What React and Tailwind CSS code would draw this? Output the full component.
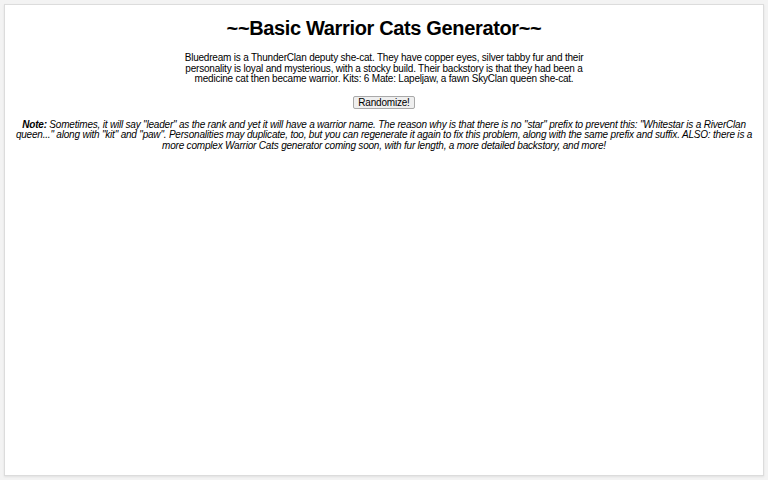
// Basic Warrior Cats Generator — single page with a generated cat and a note.

export default function App() {
  return (
    <div className="min-h-[480px] bg-[#f3f3f3] p-1 font-['Liberation_Sans',Arial,sans-serif] text-black">
      <div className="h-[472px] bg-white border border-[#dcdcdc] shadow-[0_1px_2px_rgba(0,0,0,0.08)] px-[10px] pt-[9px]">
        <h1 className="text-center text-[20px] font-bold leading-[28px] tracking-[-0.35px]">
          ~~Basic Warrior Cats Generator~~
        </h1>
        <p className="mx-auto mt-[11px] w-[410px] text-center text-[10px] leading-[10.5px] tracking-[-0.2px]">
          Bluedream is a ThunderClan deputy she-cat. They have copper eyes, silver tabby fur and their
          personality is loyal and mysterious, with a stocky build. Their backstory is that they had been a
          medicine cat then became warrior. Kits: 6 Mate: Lapeljaw, a fawn SkyClan queen she-cat.
        </p>
        <div className="mt-[11px] flex justify-center">
          <button className="border border-[#a9a9a9] bg-[#efefef] px-[4px] text-[10px] leading-[11px] tracking-[-0.2px] rounded-[2px]">
            Randomize!
          </button>
        </div>
        <p className="mt-[11px] text-center text-[10px] italic leading-[10.5px] tracking-[-0.2px]">
          <b>Note:</b> Sometimes, it will say "leader" as the rank and yet it will have a warrior name. The reason why is that there is no "star" prefix to prevent this: "Whitestar is a RiverClan queen..." along with "kit" and "paw". Personalities may duplicate, too, but you can regenerate it again to fix this problem, along with the same prefix and suffix. ALSO: there is a more complex Warrior Cats generator coming soon, with fur length, a more detailed backstory, and more!
        </p>
      </div>
    </div>
  );
}
